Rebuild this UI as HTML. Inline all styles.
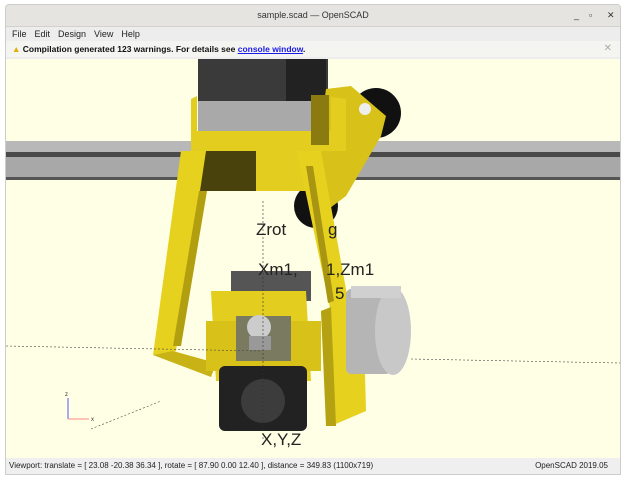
<!DOCTYPE html>
<html><head><meta charset="utf-8"><style>
body{margin:0;width:624px;height:477px;background:#fff;font-family:"Liberation Sans",sans-serif;overflow:hidden;position:relative}
.win{position:absolute;left:5px;top:4px;width:614px;height:469px;background:#ededed;border:1px solid #ccc;border-radius:4px 4px 0 0;overflow:hidden}
.title{height:21px;background:#e6e4e1;text-align:center;font-size:9px;line-height:21px;color:#333;border-bottom:1px solid #d3d1ce;position:relative}
.ctrl{position:absolute;top:0;font-size:9px;color:#333}
.menu{height:14px;font-size:9px;line-height:14px;padding-left:6px;color:#222}
.menu span{margin-right:8px}
.warn{height:16px;font-size:8.5px;line-height:16px;padding-left:6px;background:#f4f4f0;color:#111;position:relative}
.vp{position:absolute;left:0;top:54px;width:614px;height:399px;background:#ffffe5}
.status{position:absolute;left:0;top:453px;width:614px;height:16px;font-size:8px;line-height:16px;background:#efefef;color:#222}
</style></head><body>
<div class="win">
<div class="title">sample.scad — OpenSCAD<span class="ctrl" style="left:568px">_</span><span class="ctrl" style="left:583px">▫</span><span class="ctrl" style="left:601px">✕</span></div>
<div class="menu"><span>File</span><span>Edit</span><span>Design</span><span>View</span><span>Help</span></div>
<div class="warn"><span style="color:#e0b000">▲</span> <b>Compilation generated 123 warnings. For details see <u style="color:#1a1ae6">console window</u>.</b><span style="position:absolute;right:8px;color:#aaa;font-size:10px">✕</span></div>
<div class="vp">
<svg width="614" height="399" viewBox="5 58 614 399" xmlns="http://www.w3.org/2000/svg">
<rect x="5" y="140" width="614" height="12" fill="#b8b8b8"/>
<rect x="5" y="151" width="614" height="5" fill="#4a4a4a"/>
<rect x="5" y="156" width="614" height="20" fill="#a8a8a8"/>
<rect x="5" y="176" width="614" height="3" fill="#555"/>
<circle cx="375" cy="112" r="25" fill="#111"/>
<circle cx="315" cy="205" r="22" fill="#111"/>
<rect x="197" y="58" width="130" height="44" fill="#3a3a3a"/>
<rect x="285" y="58" width="40" height="44" fill="#222"/>
<rect x="197" y="100" width="118" height="30" fill="#a9a9a9"/>
<polygon points="325,88 350,85 385,115 380,135 345,195 325,210 318,140" fill="#d8c21a"/>
<circle cx="364" cy="108" r="6" fill="#eee"/>
<path d="M190,98 L196,95 L196,130 L330,130 L330,96 L345,98 L345,150 L190,150 Z" fill="#e3cd1f"/>
<rect x="310" y="94" width="18" height="50" fill="#8a7a10"/>
<polygon points="190,148 300,148 310,190 190,190" fill="#e3cd1f"/>
<rect x="195" y="150" width="60" height="40" fill="#4a420c"/>
<polygon points="180,150 205,150 175,350 152,354" fill="#e7d11f"/>
<polygon points="198,190 206,190 180,345 172,345" fill="#b29f10"/>
<polygon points="296,150 320,150 348,305 330,312" fill="#e7d11f"/>
<polygon points="305,165 312,165 333,300 327,302" fill="#a89512"/>
<polygon points="152,354 172,350 215,362 210,376" fill="#c8b215"/>
<rect x="230" y="270" width="80" height="30" fill="#555"/>
<polygon points="210,290 305,290 310,380 215,380" fill="#e3cd1f"/>
<rect x="205" y="320" width="115" height="50" fill="#d8c21a"/>
<rect x="235" y="315" width="55" height="45" fill="#7a7a60"/>
<rect x="218" y="365" width="88" height="65" rx="6" fill="#222"/>
<circle cx="262" cy="400" r="22" fill="#3c3c3c"/>
<polygon points="320,310 362,300 365,410 330,425" fill="#e7d11f"/>
<polygon points="320,310 330,306 335,425 325,425" fill="#b5a212"/>
<rect x="345" y="288" width="45" height="85" rx="5" fill="#b5b5b5"/>
<ellipse cx="392" cy="330" rx="18" ry="44" fill="#c8c8c8"/>
<rect x="350" y="285" width="50" height="12" fill="#d0d0d0"/>
<circle cx="258" cy="326" r="12" fill="#ccc"/>
<rect x="248" y="335" width="22" height="14" fill="#999"/>
<line x1="262" y1="200" x2="262" y2="440" stroke="#333" stroke-width="0.6" stroke-dasharray="2,2"/>
<line x1="5" y1="345" x2="260" y2="350" stroke="#444" stroke-width="0.6" stroke-dasharray="2,2"/>
<line x1="410" y1="358" x2="619" y2="362" stroke="#444" stroke-width="0.6" stroke-dasharray="2,2"/>
<line x1="90" y1="428" x2="160" y2="400" stroke="#444" stroke-width="0.6" stroke-dasharray="2,2"/>
<line x1="67" y1="397" x2="67" y2="418" stroke="#55f" stroke-width="1"/>
<line x1="67" y1="418" x2="88" y2="418" stroke="#f88" stroke-width="1"/>
<text x="64" y="395" font-size="6" fill="#333">z</text>
<text x="90" y="420" font-size="6" fill="#333">x</text>
<g font-family="Liberation Sans,sans-serif" font-size="17" fill="#222">
<text x="255" y="234">Zrot</text><text x="327" y="234">g</text>
<text x="257" y="274">Xm1,</text><text x="325" y="274">1,Zm1</text>
<text x="334" y="298">5</text>
<text x="260" y="444">X,Y,Z</text>
</g>
</svg>
</div>
<div class="status"><span style="padding-left:3px">Viewport: translate = [ 23.08 -20.38 36.34 ], rotate = [ 87.90 0.00 12.40 ], distance = 349.83 (1100x719)</span><span style="position:absolute;right:12px">OpenSCAD 2019.05</span></div>
</div>
</body></html>
